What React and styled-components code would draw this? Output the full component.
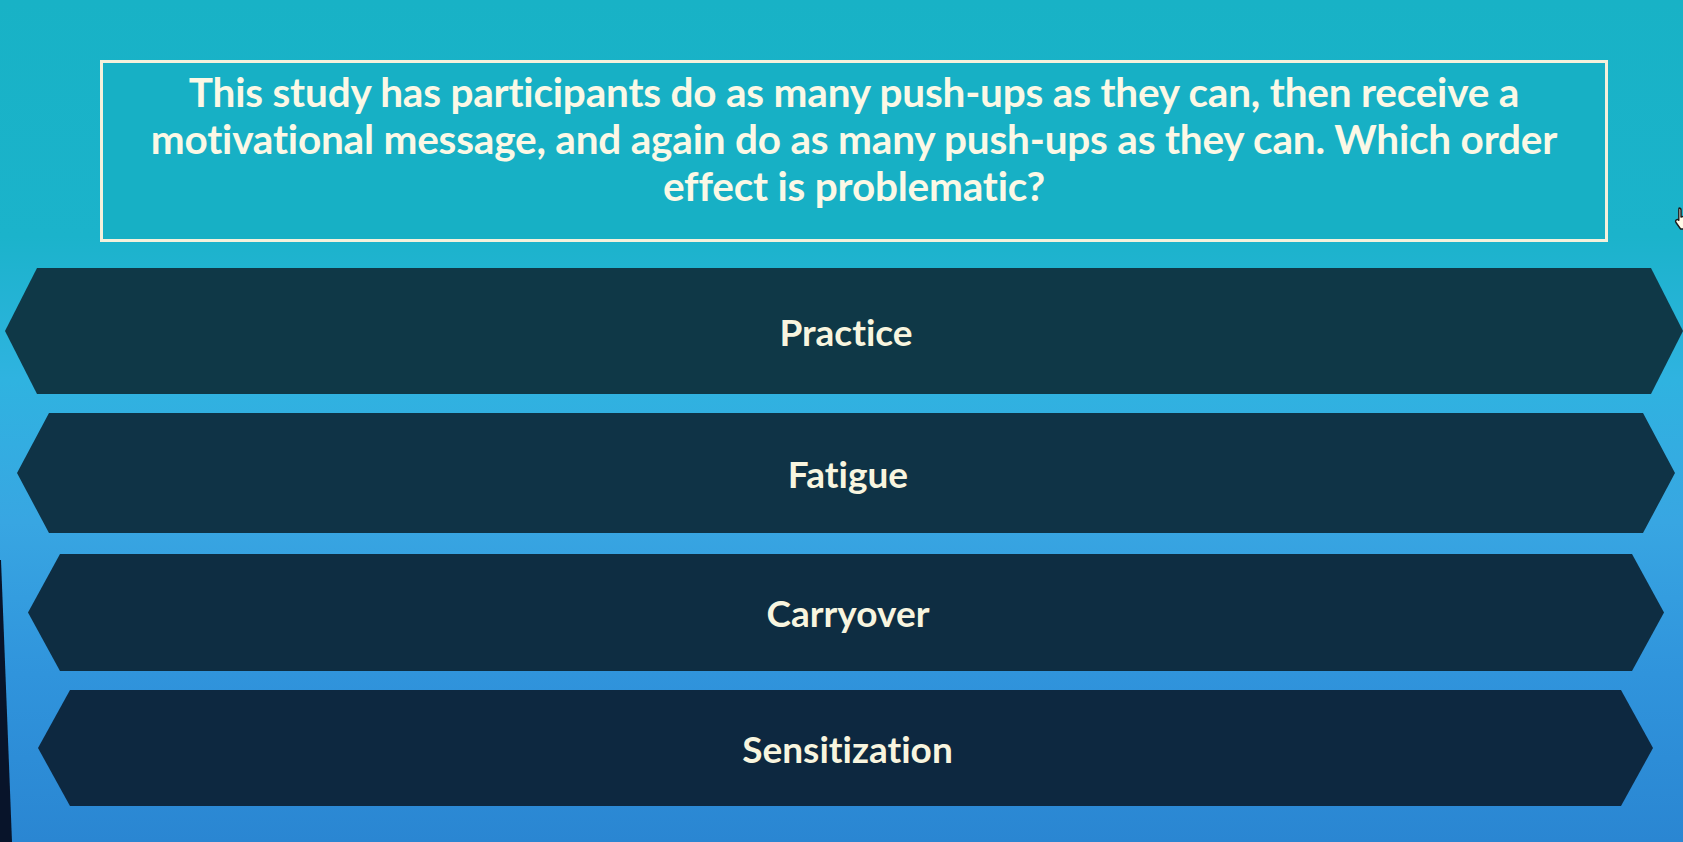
import React from 'react';
import styled, { createGlobalStyle } from 'styled-components';

const GlobalStyle = createGlobalStyle`
    html, body {
        margin: 0;
        padding: 0;
    }
    body {
        font-family: Lato, "Open Sans", sans-serif;
        overflow: hidden;
    }
`

const answers = [
    { label: 'Practice', inset: [5, 0], height: 126, gap: 26, tone: '#0f3847' },
    { label: 'Fatigue', inset: [17, 8], height: 120, gap: 19, tone: '#0f3346' },
    { label: 'Carryover', inset: [28, 19], height: 117, gap: 21, tone: '#0e2d42' },
    { label: 'Sensitization', inset: [38, 30], height: 116, gap: 19, tone: '#0d2840' },
]

// little hand pointer sitting at the right edge of the screen
const HandCursor = () => (
    <svg width="22" height="26" viewBox="0 0 22 26">
        <path
            d="M7 2c1.2 0 2 .8 2 2v7l1-.2c.9-.6 2-.4 2.6.4.9-.5 2-.3 2.6.5 1-.4 2.1.1 2.4 1.1l.6 4c.3 2.4-.4 4.5-2 6.2H8.6L4 16.5c-.7-.9-.5-2 .4-2.6.8-.5 1.8-.3 2.4.4V4c0-1.2.1-2 .2-2z"
            fill="#fffbe8"
            stroke="#1b1b1b"
            strokeWidth="1.4"
            strokeLinejoin="round"
        />
    </svg>
)

export default function App() {
    return (
        <Screen>
            <GlobalStyle />
            <QuestionBox>
                <QuestionText>
                    This study has participants do as many push-ups as they can, then receive a<br />
                    motivational message, and again do as many push-ups as they can. Which order<br />
                    effect is problematic?
                </QuestionText>
            </QuestionBox>
            <AnswerList>
                {answers.map(a => (
                    <Answer
                        key={a.label}
                        $left={a.inset[0]}
                        $right={a.inset[1]}
                        $height={a.height}
                        $gap={a.gap}
                        $tone={a.tone}
                    >
                        {a.label}
                    </Answer>
                ))}
            </AnswerList>
            <Pointer>
                <HandCursor />
            </Pointer>
            <Bezel />
        </Screen>
    )
}

const Screen = styled.div`
    position: relative;
    width: 1683px;
    height: 842px;
    box-sizing: border-box;
    padding-top: 60px;
    background: linear-gradient(
        180deg,
        #18b2c6 0%,
        #1bb3cb 28%,
        #2fb3e0 45%,
        #38a6e2 62%,
        #3094dc 80%,
        #2a86d2 100%
    );
    overflow: hidden;
`

const QuestionBox = styled.div`
    margin: 0 75px 0 100px;
    height: 182px;
    box-sizing: border-box;
    border: 3px solid #f4f1dc;
    padding-top: 5px;
    background: #17b0c5;
`

const QuestionText = styled.p`
    margin: 0;
    text-align: center;
    white-space: nowrap;
    color: #fbf8e6;
    font-family: Lato, sans-serif;
    font-weight: 700;
    font-size: 40.5px;
    line-height: 47px;
    letter-spacing: -0.2px;
    font-variant-ligatures: none;
`

const AnswerList = styled.div`
    display: flex;
    flex-direction: column;
`

const Answer = styled.div`
    margin-top: ${p => p.$gap}px;
    margin-left: ${p => p.$left}px;
    margin-right: ${p => p.$right}px;
    height: ${p => p.$height}px;
    display: flex;
    align-items: center;
    justify-content: center;
    background: ${p => p.$tone};
    clip-path: polygon(32px 0, calc(100% - 32px) 0, 100% 50%, calc(100% - 32px) 100%, 32px 100%, 0 50%);
    color: #f8f5df;
    font-family: Lato, sans-serif;
    font-weight: 700;
    font-size: 37px;
    font-variant-ligatures: none;
    padding-left: 4px;
    box-sizing: border-box;
`

const Pointer = styled.div`
    position: absolute;
    top: 206px;
    left: 1672px;
`

const Bezel = styled.div`
    position: absolute;
    left: 0;
    top: 560px;
    width: 14px;
    height: 282px;
    background: #08142a;
    clip-path: polygon(0 0, 1px 0, 12px 100%, 0 100%);
`
